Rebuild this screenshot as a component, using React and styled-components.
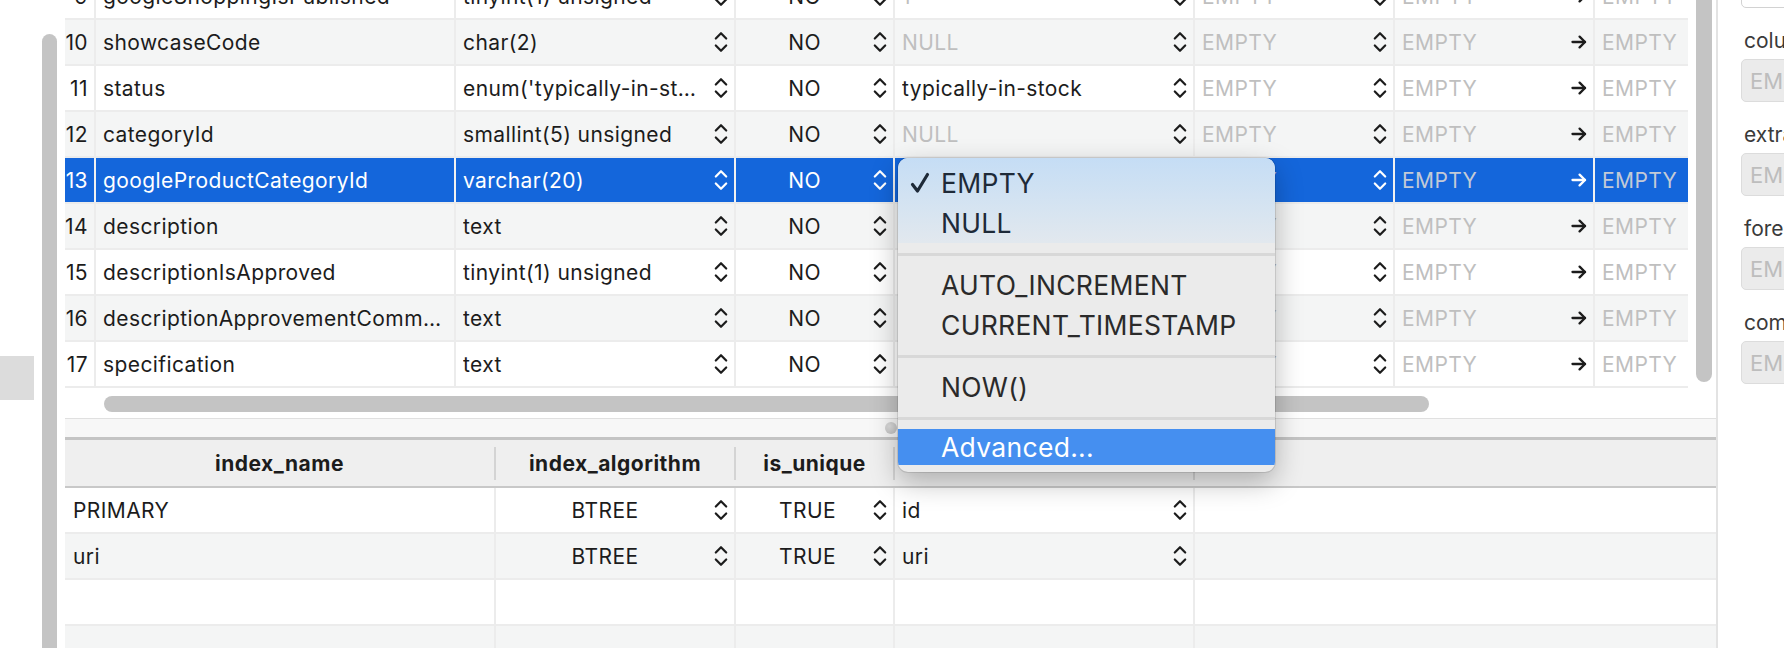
import React from 'react'
import styled, { createGlobalStyle } from 'styled-components'

const GlobalStyle = createGlobalStyle`
  html, body {
    margin: 0;
    padding: 0;
    background: #fff;
  }
  body {
    font-family: Inter, "Noto Sans", sans-serif;
    overflow: hidden;
  }
  #root {
    width: 1784px;
    height: 648px;
    overflow: hidden;
  }
`

const FIELD_COLS = '29px 358px 278px 157px 298px 198px 198px 93px'
const INDEX_COLS = '429px 238px 157px 298px 521px'

const Screen = styled.div`
  position: relative;
  display: flex;
  width: 1784px;
  height: 648px;
  overflow: hidden;
  background: #fff;
`

const Gutter = styled.div`
  width: 65px;
  flex-shrink: 0;
  display: flex;
  align-items: flex-start;
`

const GutterTab = styled.div`
  width: 34px;
  height: 44px;
  margin-top: 356px;
  background: #dcdcdc;
`

const GutterScroll = styled.div`
  width: 15px;
  height: 614px;
  margin: 34px 0 0 8px;
  border-radius: 8px 8px 0 0;
  background: #c4c4c4;
`

const Panel = styled.div`
  width: 1651px;
  flex-shrink: 0;
  border-right: 2px solid #e3e3e3;
  display: flex;
  flex-direction: column;
  overflow: hidden;

  & > * {
    flex-shrink: 0;
  }
`

const TopPane = styled.div`
  display: grid;
  grid-template-columns: 1623px 1fr;
  height: 418px;
  border-bottom: 1px solid #e0e0e0;
  overflow: hidden;
`

const TableArea = styled.div`
  display: flex;
  flex-direction: column;
  min-height: 0;
  overflow: hidden;
`

const Rows = styled.div`
  display: flex;
  flex-direction: column;
  gap: 2px;
  padding-bottom: 2px;
  margin-top: ${p => p.$offset || 0}px;
  background: #ececec;
`

const Row = styled.div`
  display: grid;
  grid-template-columns: ${p => p.$cols};
  column-gap: 2px;
  height: 44px;
  flex-shrink: 0;
  background: ${p => (p.$selected ? '#f1f1f1' : '#ececec')};
`

const Cell = styled.div`
  display: flex;
  align-items: center;
  min-width: 0;
  padding: 0 6px 0 ${p => p.$padLeft ?? 7}px;
  background: ${p => (p.$selected ? '#1466db' : p.$odd ? '#f4f5f5' : '#fff')};
  color: ${p => (p.$selected ? '#fff' : '#1c1c1c')};
  font-size: 21px;
  letter-spacing: 0.4px;
`

const CellText = styled.span`
  flex: 1;
  min-width: 0;
  overflow: hidden;
  white-space: nowrap;
  text-overflow: ellipsis;
  text-align: ${p => p.$align || 'left'};
  color: ${p => (p.$muted ? (p.$selected ? '#c3cad6' : '#bfbfbf') : 'inherit')};
`

const HScrollTrack = styled.div`
  margin-top: auto;
  padding: 0 0 6px 39px;
`

const HScrollBar = styled.div`
  width: 1325px;
  height: 16px;
  border-radius: 8px;
  background: #c4c4c4;
`

const VScrollCol = styled.div`
  padding-left: 8px;
`

const VScrollBar = styled.div`
  width: 16px;
  height: 382px;
  border-radius: 0 0 8px 8px;
  background: #c4c4c4;
`

const Splitter = styled.div`
  height: 18px;
  display: flex;
  align-items: center;
  justify-content: center;
  background: #f7f7f7;
  border-bottom: 3px solid #c4c4c4;
`

const Dimple = styled.div`
  width: 12px;
  height: 12px;
  border-radius: 50%;
  background: radial-gradient(circle at 40% 35%, #dedede, #bdbdbd);
`

const IndexHeader = styled.div`
  display: grid;
  grid-template-columns: 431px 240px 159px 300px 521px;
  height: 46px;
  background: #efefef;
  border-bottom: 2px solid #c8c8c8;
`

const HeaderCell = styled.div`
  display: flex;
  align-items: center;
  justify-content: center;
  padding-right: ${p => (p.$divider ? 2 : 0)}px;
  font-size: 21px;
  font-weight: 700;
  letter-spacing: 0.5px;
  color: #1c1c1c;
  background: ${p =>
    p.$divider
      ? 'linear-gradient(#d4d4d4, #d4d4d4) right center / 2px 33px no-repeat'
      : 'none'};
`

const Sidebar = styled.div`
  flex: 1;
  min-width: 0;
  display: flex;
  flex-direction: column;
  padding-left: 23px;
  overflow: hidden;
`

const SideInput = styled.div`
  flex-shrink: 0;
  width: 160px;
  height: 43px;
  box-sizing: border-box;
  display: flex;
  align-items: center;
  padding-left: 8px;
  border: 1px solid ${p => (p.$plain ? '#d2d2d2' : '#dcdcdc')};
  border-radius: 5px;
  background: ${p => (p.$plain ? '#fff' : '#ebebeb')};
  color: #bdbdbd;
  font-size: 22px;
  white-space: nowrap;
  margin-top: ${p => p.$pull || 0}px;
`

const SideLabel = styled.div`
  flex-shrink: 0;
  height: 51px;
  box-sizing: border-box;
  padding: 21px 0 0 3px;
  line-height: 24px;
  font-size: 21px;
  color: #3a3a3a;
  white-space: nowrap;
`

const Menu = styled.div`
  position: absolute;
  left: 898px;
  top: 158px;
  width: 377px;
  border-radius: 10px;
  overflow: hidden;
  background: #ebebeb;
  box-shadow: 0 10px 28px rgba(0, 0, 0, 0.28), 0 0 0 1px rgba(0, 0, 0, 0.1);
`

const MenuGroup = styled.div`
  padding: ${p => p.$pad || '0'};
  background: ${p =>
    p.$tinted ? 'linear-gradient(to bottom, #c5ddf5 0%, #d6e4f1 60%, #e2e8ee 100%)' : 'transparent'};
`

const MenuSep = styled.div`
  height: 22px;
  display: flex;
  align-items: center;

  &::before {
    content: '';
    display: block;
    width: 100%;
    height: 3px;
    background: #d8d8d8;
  }
`

const MenuItem = styled.div`
  display: flex;
  align-items: center;
  height: ${p => (p.$active ? 36 : 40)}px;
  padding-left: 12px;
  font-size: 26.5px;
  letter-spacing: 0.3px;
  color: ${p => (p.$active ? '#fff' : p.$tinted ? '#1e2a38' : '#2a2a2a')};
  background: ${p => (p.$active ? '#458ff0' : 'transparent')};
`

const CheckSlot = styled.span`
  width: 31px;
  display: flex;
  align-items: center;
`

const Chevrons = ({ color = '#1c1c1c' }) => (
  <svg width="14" height="24" viewBox="0 0 14 24" fill="none" stroke={color}
    strokeWidth="2.2" strokeLinecap="round" strokeLinejoin="round">
    <path d="M1.8 8.5 L7 3.2 L12.2 8.5" />
    <path d="M1.8 15.5 L7 20.8 L12.2 15.5" />
  </svg>
)

const Arrow = ({ color = '#1c1c1c' }) => (
  <svg width="16" height="14" viewBox="0 0 16 14" fill="none" stroke={color}
    strokeWidth="2.3" strokeLinecap="round" strokeLinejoin="round">
    <path d="M1.5 7 H14" />
    <path d="M8.6 1.6 L14 7 L8.6 12.4" />
  </svg>
)

const Check = () => (
  <svg width="20" height="22" viewBox="0 0 20 22" fill="none" stroke="#1e2a38"
    strokeWidth="3.2" strokeLinecap="round" strokeLinejoin="round">
    <path d="M2.5 12.5 L7.5 19 L17.5 2.5" />
  </svg>
)

const fields = [
  { n: 9, name: 'googleShoppingIsPublished', type: 'tinyint(1) unsigned', def: '1', defMuted: true },
  { n: 10, name: 'showcaseCode', type: 'char(2)', def: 'NULL', defMuted: true },
  { n: 11, name: 'status', type: "enum('typically-in-st…", def: 'typically-in-stock' },
  { n: 12, name: 'categoryId', type: 'smallint(5) unsigned', def: 'NULL', defMuted: true },
  { n: 13, name: 'googleProductCategoryId', type: 'varchar(20)', def: 'EMPTY', defMuted: true, selected: true },
  { n: 14, name: 'description', type: 'text', def: 'EMPTY', defMuted: true },
  { n: 15, name: 'descriptionIsApproved', type: 'tinyint(1) unsigned', def: 'EMPTY', defMuted: true },
  { n: 16, name: 'descriptionApprovementComm…', type: 'text', def: 'EMPTY', defMuted: true },
  { n: 17, name: 'specification', type: 'text', def: 'EMPTY', defMuted: true },
]

const indexes = [
  { name: 'PRIMARY', algo: 'BTREE', unique: 'TRUE', cols: 'id' },
  { name: 'uri', algo: 'BTREE', unique: 'TRUE', cols: 'uri' },
  null,
  null,
]

function FieldRow({ f, odd }) {
  const s = f.selected
  const icon = s ? '#fff' : '#1c1c1c'
  const cell = { $selected: s, $odd: odd }
  return (
    <Row $cols={FIELD_COLS} $selected={s}>
      <Cell {...cell} $padLeft={0}><CellText $align="right">{f.n}</CellText></Cell>
      <Cell {...cell}><CellText>{f.name}</CellText></Cell>
      <Cell {...cell}><CellText>{f.type}</CellText><Chevrons color={icon} /></Cell>
      <Cell {...cell} $padLeft={0}><CellText $align="center">NO</CellText><Chevrons color={icon} /></Cell>
      <Cell {...cell}>
        <CellText $muted={f.defMuted} $selected={s}>{f.def}</CellText>
        <Chevrons color={icon} />
      </Cell>
      <Cell {...cell}><CellText $muted $selected={s}>EMPTY</CellText><Chevrons color={icon} /></Cell>
      <Cell {...cell}><CellText $muted $selected={s}>EMPTY</CellText><Arrow color={icon} /></Cell>
      <Cell {...cell}><CellText $muted $selected={s}>EMPTY</CellText></Cell>
    </Row>
  )
}

function IndexRow({ idx, odd }) {
  return (
    <Row $cols={INDEX_COLS}>
      <Cell $odd={odd} $padLeft={8}><CellText>{idx && idx.name}</CellText></Cell>
      <Cell $odd={odd} $padLeft={0}><CellText $align="center">{idx && idx.algo}</CellText>{idx && <Chevrons />}</Cell>
      <Cell $odd={odd} $padLeft={6}><CellText $align="center">{idx && idx.unique}</CellText>{idx && <Chevrons />}</Cell>
      <Cell $odd={odd}><CellText>{idx && idx.cols}</CellText>{idx && <Chevrons />}</Cell>
      <Cell $odd={odd} />
    </Row>
  )
}

const sideFields = ['column_default', 'extra', 'foreign_key', 'comment']

function App() {
  return (
    <Screen>
      <GlobalStyle />
      <Gutter>
        <GutterTab />
        <GutterScroll />
      </Gutter>

      <Panel>
        <TopPane>
          <TableArea>
            <Rows $offset={-26}>
              {fields.map((f, i) => <FieldRow key={f.n} f={f} odd={i % 2 === 1} />)}
            </Rows>
            <HScrollTrack><HScrollBar /></HScrollTrack>
          </TableArea>
          <VScrollCol><VScrollBar /></VScrollCol>
        </TopPane>

        <Splitter><Dimple /></Splitter>

        <IndexHeader>
          <HeaderCell $divider>index_name</HeaderCell>
          <HeaderCell $divider>index_algorithm</HeaderCell>
          <HeaderCell $divider>is_unique</HeaderCell>
          <HeaderCell $divider>columns</HeaderCell>
          <HeaderCell />
        </IndexHeader>
        <Rows>
          {indexes.map((idx, i) => <IndexRow key={i} idx={idx} odd={i % 2 === 1} />)}
        </Rows>
      </Panel>

      <Sidebar>
        <SideInput $plain $pull={-35} />
        {sideFields.map(name => (
          <React.Fragment key={name}>
            <SideLabel>{name}</SideLabel>
            <SideInput>EMPTY</SideInput>
          </React.Fragment>
        ))}
      </Sidebar>

      <Menu>
        <MenuGroup $tinted $pad="5px 0 0">
          <MenuItem $tinted><CheckSlot><Check /></CheckSlot>EMPTY</MenuItem>
          <MenuItem $tinted><CheckSlot />NULL</MenuItem>
        </MenuGroup>
        <MenuSep />
        <MenuItem><CheckSlot />AUTO_INCREMENT</MenuItem>
        <MenuItem><CheckSlot />CURRENT_TIMESTAMP</MenuItem>
        <MenuSep />
        <MenuItem><CheckSlot />NOW()</MenuItem>
        <MenuSep />
        <MenuGroup $pad="0 0 7px">
          <MenuItem $active><CheckSlot />Advanced...</MenuItem>
        </MenuGroup>
      </Menu>
    </Screen>
  )
}

export default App
